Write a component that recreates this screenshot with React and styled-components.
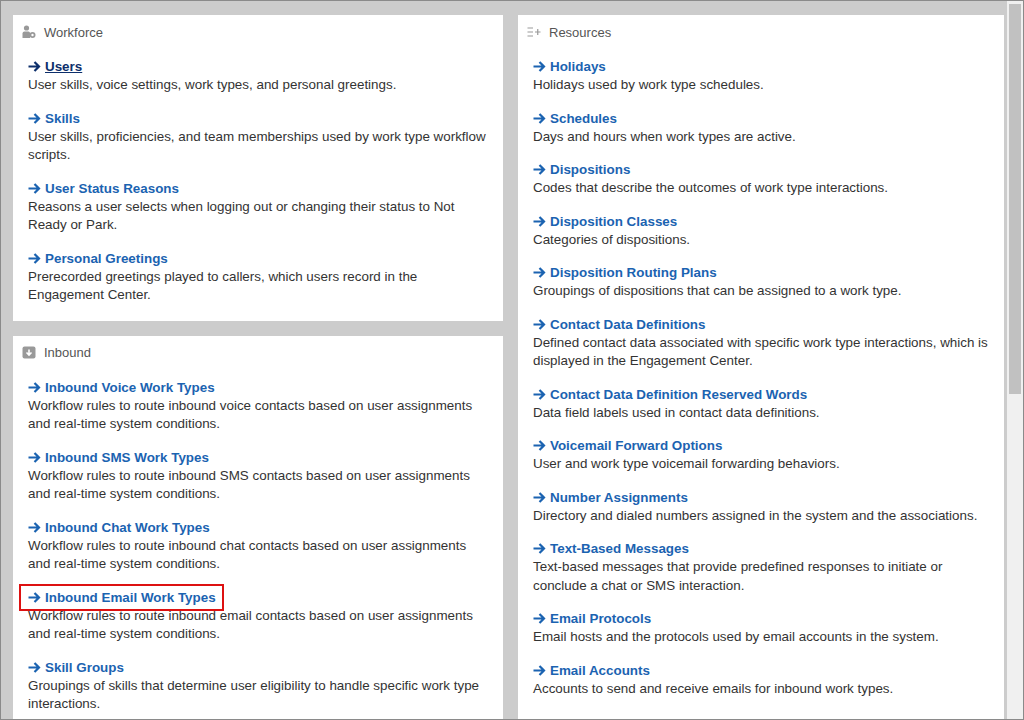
import React from "react";
import styled, { createGlobalStyle } from "styled-components";

const Global = createGlobalStyle`
  html,body{margin:0;padding:0;background:#fff;}
  body{font-family:"Liberation Sans",Arial,sans-serif;}
`;

const Frame = styled.div`
  width:1024px;height:720px;box-sizing:border-box;border:1px solid #8a8a8a;
  background:#cccccc;display:flex;overflow:hidden;
`;
const Content = styled.div`
  flex:1;display:flex;gap:15px;padding:14px 0 0 12px;align-items:flex-start;
`;
const Column = styled.div`
  width:${p => p.$w}px;display:flex;flex-direction:column;gap:15px;
`;
const Card = styled.div`
  background:#fff;padding:8px 14px 16px 15px;box-sizing:border-box;
  min-height:${p => p.$min || 0}px;
`;
const Header = styled.div`
  display:flex;align-items:center;gap:8px;height:18px;font-size:13px;color:#555;
  margin-left:-6px;margin-bottom:16px;
`;
const Item = styled.div`
  margin-bottom:14px;&:last-child{margin-bottom:0;}
`;
const Title = styled.a`
  display:inline-flex;align-items:center;gap:4px;font-size:13.4px;font-weight:bold;line-height:19px;
  color:${p => p.$dark ? "#0d2f6b" : "#1b63b1"};
  text-decoration:${p => p.$dark ? "underline" : "none"};cursor:pointer;
  ${p => p.$boxed && `outline:2px solid #dd1111;padding:2px 6px 2px 7px;margin:-2px 0 -2px -7px;`}
`;
const Desc = styled.div`
  font-size:13.4px;line-height:18.5px;color:#333;
`;
const Scrollbar = styled.div`
  width:16px;margin-left:auto;background:#f0f0f0;display:flex;justify-content:center;padding-top:3px;
`;
const Thumb = styled.div`
  width:12px;height:390px;background:#c1c1c1;
`;

const ArrowIcon = () => (
  <svg width="13" height="11" viewBox="0 0 13 11" fill="none" stroke="currentColor" strokeWidth="2.2">
    <path d="M0.5 5.5H11M6.5 1L11 5.5L6.5 10" />
  </svg>
);

const workforce = [
  ["Users","User skills, voice settings, work types, and personal greetings.",{dark:true}],
  ["Skills","User skills, proficiencies, and team memberships used by work type workflow scripts."],
  ["User Status Reasons","Reasons a user selects when logging out or changing their status to Not Ready or Park."],
  ["Personal Greetings","Prerecorded greetings played to callers, which users record in the Engagement Center."],
];
const inbound = [
  ["Inbound Voice Work Types","Workflow rules to route inbound voice contacts based on user assignments and real-time system conditions."],
  ["Inbound SMS Work Types","Workflow rules to route inbound SMS contacts based on user assignments and real-time system conditions."],
  ["Inbound Chat Work Types","Workflow rules to route inbound chat contacts based on user assignments and real-time system conditions."],
  ["Inbound Email Work Types","Workflow rules to route inbound email contacts based on user assignments and real-time system conditions.",{boxed:true}],
  ["Skill Groups","Groupings of skills that determine user eligibility to handle specific work type interactions."],
];
const resources = [
  ["Holidays","Holidays used by work type schedules."],
  ["Schedules","Days and hours when work types are active."],
  ["Dispositions","Codes that describe the outcomes of work type interactions."],
  ["Disposition Classes","Categories of dispositions."],
  ["Disposition Routing Plans","Groupings of dispositions that can be assigned to a work type."],
  ["Contact Data Definitions","Defined contact data associated with specific work type interactions, which is displayed in the Engagement Center."],
  ["Contact Data Definition Reserved Words","Data field labels used in contact data definitions."],
  ["Voicemail Forward Options","User and work type voicemail forwarding behaviors."],
  ["Number Assignments","Directory and dialed numbers assigned in the system and the associations."],
  ["Text-Based Messages","Text-based messages that provide predefined responses to initiate or conclude a chat or SMS interaction."],
  ["Email Protocols","Email hosts and the protocols used by email accounts in the system."],
  ["Email Accounts","Accounts to send and receive emails for inbound work types."],
];

const Items = ({ list }) => list.map(([t, d, o = {}]) => (
  <Item key={t}>
    <Title $dark={o.dark} $boxed={o.boxed}><ArrowIcon />{t}</Title>
    <Desc>{d}</Desc>
  </Item>
));

const WorkforceIcon = () => (
  <svg width="14" height="14" viewBox="0 0 14 14" fill="#999">
    <circle cx="4.5" cy="3" r="2.6" />
    <path d="M0.5 13V8.5Q0.5 6.5 2.5 6.5H6.5Q8 6.5 8 8V13Z" />
    <circle cx="10.5" cy="10" r="3" fill="#999" />
    <circle cx="10.5" cy="10" r="1.2" fill="#fff" />
  </svg>
);
const ResourcesIcon = () => (
  <svg width="14" height="12" viewBox="0 0 14 12" stroke="#999" strokeWidth="1.2" fill="none">
    <path d="M0.5 2H6M0.5 6H6M0.5 10H6M8 6H13.5M10.75 3V9" />
  </svg>
);
const InboundIcon = () => (
  <svg width="14" height="13" viewBox="0 0 14 13">
    <rect x="0.5" y="0.5" width="13" height="12" rx="2" fill="#999" />
    <path d="M7 3.5V8.5M4.5 6.5L7 9L9.5 6.5" stroke="#fff" strokeWidth="1.6" fill="none" />
  </svg>
);

export default function App() {
  return (
    <>
      <Global />
      <Frame>
        <Content>
          <Column $w={490}>
            <Card>
              <Header><WorkforceIcon />Workforce</Header>
              <Items list={workforce} />
            </Card>
            <Card $min={400}>
              <Header><InboundIcon />Inbound</Header>
              <Items list={inbound} />
            </Card>
          </Column>
          <Column $w={486}>
            <Card $min={720}>
              <Header><ResourcesIcon />Resources</Header>
              <Items list={resources} />
            </Card>
          </Column>
        </Content>
        <Scrollbar><Thumb /></Scrollbar>
      </Frame>
    </>
  );
}
